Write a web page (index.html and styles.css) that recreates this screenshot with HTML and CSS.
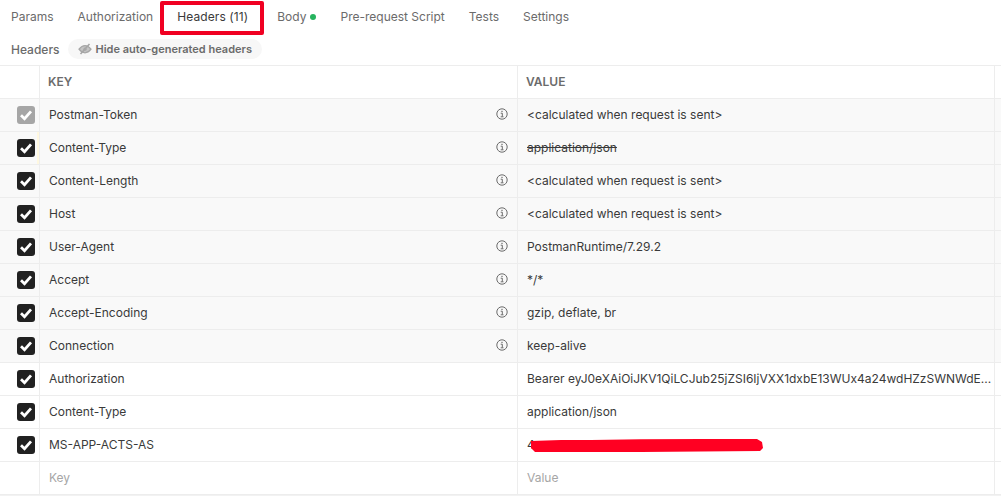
FILE: index.html
```html
<!DOCTYPE html>
<html lang="en">
<head>
<meta charset="utf-8">
<title>Headers</title>
<link rel="stylesheet" href="styles.css">
</head>
<body>
<svg class="defs" width="0" height="0" aria-hidden="true">
  <symbol id="check" viewBox="0 0 18 18"><path d="M4 9.2 7.5 12.7 14 5.4" fill="none" stroke="#fff" stroke-width="2.8"/></symbol>
  <symbol id="info" viewBox="0 0 12 12"><circle cx="6" cy="6" r="5.2" fill="none" stroke="#6b6b6b" stroke-width="1"/><path d="M4.7 5.2H6.3V8.6M4.7 8.8H7.5" fill="none" stroke="#6b6b6b" stroke-width="1"/><rect x="5.4" y="2.8" width="1.2" height="1.2" fill="#6b6b6b"/></symbol>
</svg>
<nav class="tabs">
  <span class="tab">Params</span>
  <span class="tab">Authorization</span>
  <span class="tab active">Headers (11)</span>
  <span class="tab">Body<i class="dot"></i></span>
  <span class="tab">Pre-request Script</span>
  <span class="tab">Tests</span>
  <span class="tab">Settings</span>
</nav>
<div class="highlight"></div>
<div class="toolbar">
  <span class="toolbar-title">Headers</span>
  <span class="pill">
    <svg class="eye" viewBox="0 0 14 14" width="14" height="14" aria-hidden="true"><path d="M1 7.2C3 4.6 5 3.6 7 3.6S11 4.6 13 7.2C11 9.8 9 10.8 7 10.8S3 9.8 1 7.2Z" fill="#c4c4c4" stroke="#a6a6a6" stroke-width="1.3"/><circle cx="7" cy="7.2" r="1.6" fill="#a6a6a6"/><path d="M2.5 12 11.5 2" stroke="#a6a6a6" stroke-width="1.6"/></svg>
    Hide auto-generated headers
  </span>
</div>
<div class="table">
  <div class="row head"><div class="c check"></div><div class="c key">KEY</div><div class="c value">VALUE</div><div class="c end"></div></div>

  <div class="row auto"><div class="c check"><span class="box off"><svg><use href="#check"/></svg></span></div><div class="c key">Postman-Token<svg class="info"><use href="#info"/></svg></div><div class="c value">&lt;calculated when request is sent&gt;</div><div class="c end"></div></div>
  <div class="row auto"><div class="c check mark"><span class="box"><svg><use href="#check"/></svg></span></div><div class="c key">Content-Type<svg class="info"><use href="#info"/></svg></div><div class="c value"><s>application/json</s></div><div class="c end"></div></div>
  <div class="row auto"><div class="c check"><span class="box"><svg><use href="#check"/></svg></span></div><div class="c key">Content-Length<svg class="info"><use href="#info"/></svg></div><div class="c value">&lt;calculated when request is sent&gt;</div><div class="c end"></div></div>
  <div class="row auto"><div class="c check"><span class="box"><svg><use href="#check"/></svg></span></div><div class="c key">Host<svg class="info"><use href="#info"/></svg></div><div class="c value">&lt;calculated when request is sent&gt;</div><div class="c end"></div></div>
  <div class="row auto"><div class="c check"><span class="box"><svg><use href="#check"/></svg></span></div><div class="c key">User-Agent<svg class="info"><use href="#info"/></svg></div><div class="c value">PostmanRuntime/7.29.2</div><div class="c end"></div></div>
  <div class="row auto"><div class="c check"><span class="box"><svg><use href="#check"/></svg></span></div><div class="c key">Accept<svg class="info"><use href="#info"/></svg></div><div class="c value">*/*</div><div class="c end"></div></div>
  <div class="row auto"><div class="c check"><span class="box"><svg><use href="#check"/></svg></span></div><div class="c key">Accept-Encoding<svg class="info"><use href="#info"/></svg></div><div class="c value">gzip, deflate, br</div><div class="c end"></div></div>
  <div class="row auto"><div class="c check"><span class="box"><svg><use href="#check"/></svg></span></div><div class="c key">Connection<svg class="info"><use href="#info"/></svg></div><div class="c value">keep-alive</div><div class="c end"></div></div>

  <div class="row"><div class="c check"><span class="box"><svg><use href="#check"/></svg></span></div><div class="c key">Authorization</div><div class="c value"><span class="clip">Bearer eyJ0eXAiOiJKV1QiLCJub25jZSI6IjVXX1dxbE13WUx4a24wdHZzSWNWdE...</span></div><div class="c end"></div></div>
  <div class="row"><div class="c check"><span class="box"><svg><use href="#check"/></svg></span></div><div class="c key">Content-Type</div><div class="c value">application/json</div><div class="c end"></div></div>
  <div class="row"><div class="c check"><span class="box"><svg><use href="#check"/></svg></span></div><div class="c key">MS-APP-ACTS-AS</div><div class="c value redacted">4<svg class="scribble" width="232" height="13" viewBox="0 0 232 13" aria-hidden="true"><path d="M0 2 30 1 60 1 110 .3 170 0 226 0 231 3 232 9 229 12 170 12.5 110 13 50 13 4 13 0 9Z" fill="#ff0022"/></svg></div><div class="c end"></div></div>
  <div class="row blank"><div class="c check"></div><div class="c key">Key</div><div class="c value">Value</div><div class="c end"></div></div>
</div>
</body>
</html>
```

FILE: styles.css
```css
* { box-sizing: border-box; }
html, body { margin: 0; height: 100%; }
body {
  position: relative;
  background: #fff;
  font-family: Inter, "Liberation Sans", sans-serif;
  font-size: 12px;
  color: #3a3a3a;
  overflow: hidden;
}
.defs { position: absolute; }

.tabs {
  display: flex;
  gap: 24px;
  height: 34px;
  padding-left: 11px;
  align-items: center;
  color: #6b6b6b;
}
.tab { display: flex; align-items: center; line-height: 16px; }
.tab.active { color: #3a3a3a; margin-right: 5px; letter-spacing: 0.1px; font-weight: 400; }
.dot {
  width: 6px;
  height: 6px;
  margin-left: 4px;
  border-radius: 50%;
  background: #26b35e;
}
.highlight {
  position: absolute;
  left: 160px;
  top: 1px;
  width: 104px;
  height: 34px;
  border: 4px solid #f00022;
  border-radius: 2px;
}

.toolbar {
  display: flex;
  align-items: center;
  gap: 8px;
  height: 31px;
  padding-left: 11px;
  padding-bottom: 1px;
}
.toolbar-title { font-weight: 500; color: #6b6b6b; }
.pill {
  display: flex;
  align-items: center;
  gap: 4px;
  height: 20px;
  padding: 0 10px;
  border-radius: 10px;
  background: #f7f7f7;
  font-size: 11px;
  font-weight: 600;
  color: #6b6b6b;
}

.table {
  border-top: 1px solid #ededed;
  border-bottom: 1px solid #f2f2f2;
}
.row {
  display: grid;
  grid-template-columns: 40px 478px 477px 1fr;
  height: 33px;
  border-bottom: 1px solid #ededed;
}
.row.auto { background: #f9f9f9; }
.c {
  display: flex;
  align-items: center;
  min-width: 0;
  padding-bottom: 2px;
  border-right: 1px solid #ededed;
}
.c.end { border-right: 0; }
.key { padding-left: 9px; padding-right: 9px; justify-content: space-between; }
.value { padding-left: 9px; white-space: nowrap; }
.check { justify-content: flex-start; padding-left: 17px; padding-bottom: 0; }
.check.mark { box-shadow: inset -2px 0 0 #fff8e0; }
.head { background: #fff; font-weight: 600; color: #6b6b6b; }
.head .key { padding-left: 8px; }
.head .value { padding-left: 8px; }
.blank { color: #a6a6a6; }

.box {
  display: block;
  width: 18px;
  height: 18px;
  border-radius: 3px;
  background: #212121;
}
.box.off { background: #a6a6a6; }
.box svg { display: block; width: 18px; height: 18px; }
.info { width: 12px; height: 12px; flex: none; }
.clip { display: block; overflow: hidden; width: 466px; }
.redacted { position: relative; }
.scribble { position: absolute; left: 13px; top: 10px; }
```
